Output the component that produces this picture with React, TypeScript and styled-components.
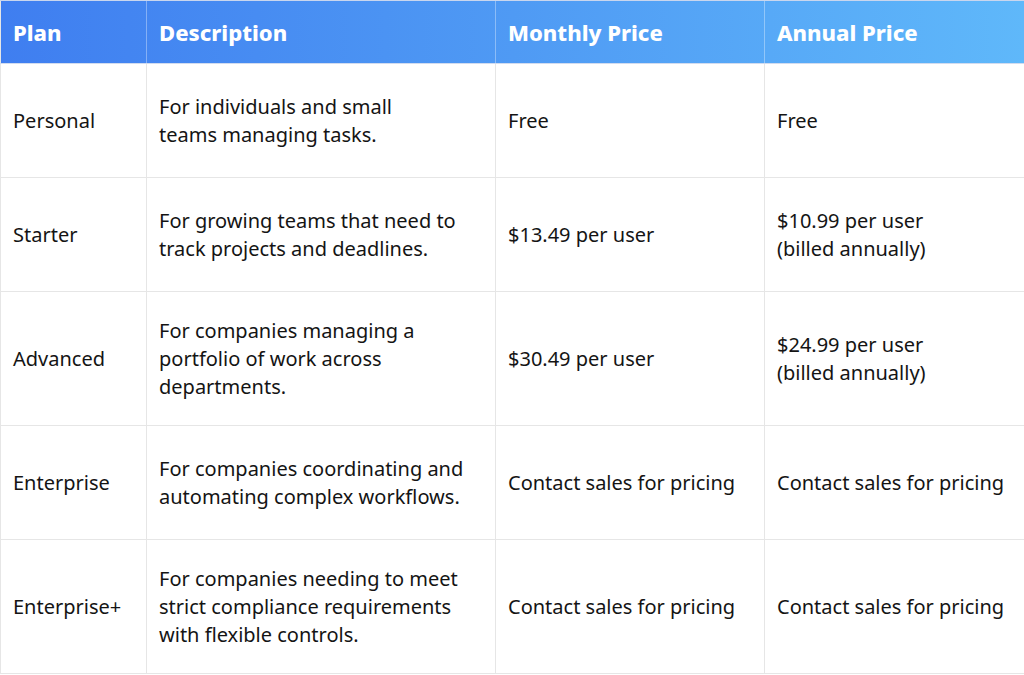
import styled, { createGlobalStyle } from "styled-components";

const GlobalStyle = createGlobalStyle`
  html, body {
    margin: 0;
    padding: 0;
    background: #ffffff;
  }
  body {
    font-family: "Noto Sans", "Open Sans", sans-serif;
    color: #141414;
  }
  *, *::before, *::after {
    box-sizing: border-box;
  }
`;

const Table = styled.table`
  width: 1024px;
  border-collapse: collapse;
  table-layout: fixed;
`;

const HeadRow = styled.tr`
  height: 63px;
  background: linear-gradient(90deg, #3f7ef0 0%, #4f9af4 50%, #5fb8fa 100%);
`;

const HeadCell = styled.th<{ $w: number }>`
  width: ${(p) => p.$w}px;
  padding: 0 12px;
  text-align: left;
  color: #ffffff;
  font-size: 22px;
  font-weight: 800;
  border-left: 1px solid rgba(255, 255, 255, 0.35);
  border-top: 1px solid #c9d6ee;
  border-bottom: 1px solid #d2dcef;
  &:first-child {
    border-left: 1px solid #e6e6e6;
  }
  &:last-child {
    border-right: 1px solid #e6e6e6;
  }
`;

const Row = styled.tr<{ $h: number }>`
  height: ${(p) => p.$h}px;
`;

const Cell = styled.td`
  padding: 0 12px;
  font-size: 20px;
  line-height: 28px;
  color: #141414;
  border: 1px solid #e6e6e6;
  vertical-align: middle;
`;

type Plan = {
  name: string;
  desc: string[];
  monthly: string[];
  annual: string[];
  h: number;
};

const plans: Plan[] = [
  {
    name: "Personal",
    desc: ["For individuals and small", "teams managing tasks."],
    monthly: ["Free"],
    annual: ["Free"],
    h: 114,
  },
  {
    name: "Starter",
    desc: ["For growing teams that need to", "track projects and deadlines."],
    monthly: ["$13.49 per user"],
    annual: ["$10.99 per user", "(billed annually)"],
    h: 114,
  },
  {
    name: "Advanced",
    desc: ["For companies managing a", "portfolio of work across", "departments."],
    monthly: ["$30.49 per user"],
    annual: ["$24.99 per user", "(billed annually)"],
    h: 134,
  },
  {
    name: "Enterprise",
    desc: ["For companies coordinating and", "automating complex workflows."],
    monthly: ["Contact sales for pricing"],
    annual: ["Contact sales for pricing"],
    h: 114,
  },
  {
    name: "Enterprise+",
    desc: [
      "For companies needing to meet",
      "strict compliance requirements",
      "with flexible controls.",
    ],
    monthly: ["Contact sales for pricing"],
    annual: ["Contact sales for pricing"],
    h: 134,
  },
];

function Lines({ lines }: { lines: string[] }) {
  return (
    <>
      {lines.map((l, i) => (
        <div key={i}>{l}</div>
      ))}
    </>
  );
}

export default function App() {
  return (
    <>
      <GlobalStyle />
      <Table>
        <thead>
          <HeadRow>
            <HeadCell $w={146}>Plan</HeadCell>
            <HeadCell $w={349}>Description</HeadCell>
            <HeadCell $w={269}>Monthly Price</HeadCell>
            <HeadCell $w={260}>Annual Price</HeadCell>
          </HeadRow>
        </thead>
        <tbody>
          {plans.map((p) => (
            <Row key={p.name} $h={p.h}>
              <Cell>{p.name}</Cell>
              <Cell>
                <Lines lines={p.desc} />
              </Cell>
              <Cell>
                <Lines lines={p.monthly} />
              </Cell>
              <Cell>
                <Lines lines={p.annual} />
              </Cell>
            </Row>
          ))}
        </tbody>
      </Table>
    </>
  );
}
